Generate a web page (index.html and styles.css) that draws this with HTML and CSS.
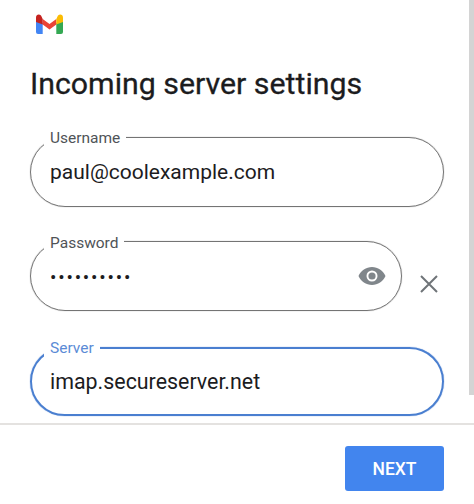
FILE: index.html
```html
<!DOCTYPE html>
<html lang="en">
<head>
<meta charset="utf-8">
<title>Incoming server settings</title>
<link rel="stylesheet" href="styles.css">
</head>
<body>
<div class="screen">
  <div class="scrollbar"></div>
  <main class="content">
    <svg class="logo" viewBox="0 0 27 20" width="27" height="20" aria-label="Gmail">
      <path d="M0 6V18a2 2 0 0 0 2 2H6.700V9z" fill="#4285f4"/>
      <path d="M20.300 20H25a2 2 0 0 0 2-2V6l-6.700 3z" fill="#34a853"/>
      <path d="M6.700 5 13.500 10 20.300 5V10.500L13.500 15.500 6.700 10.500z" fill="#ea4335"/>
      <path d="M0 8V3.500C0 .5 3-.3 5 1.500L6.700 5V10.500z" fill="#c5221f"/>
      <path d="M20.300 5 22 1.500C24-.3 27 .5 27 3.500V8L20.300 10.500z" fill="#fbbc04"/>
    </svg>
    <h1 class="title">Incoming server settings</h1>
    <div class="field field-username">
      <span class="label">Username</span>
      <span class="value">paul@coolexample.com</span>
    </div>
    <div class="password-row">
      <div class="field field-password">
        <span class="label">Password</span>
        <span class="value dots">••••••••••</span>
        <svg class="eye" viewBox="0 0 28 20" width="28" height="20">
          <path fill-rule="evenodd" d="M14 1C8 1 3 4.700 0.500 10 3 15.300 8 19 14 19s11-3.700 13.500-9C25 4.700 20 1 14 1zM14 15.500a5.500 5.500 0 1 1 0-11 5.500 5.500 0 0 1 0 11z" fill="#80868b"/>
          <circle cx="14" cy="10" r="3.600" fill="#80868b"/>
        </svg>
      </div>
      <svg class="clear" viewBox="0 0 18 18" width="18" height="18">
        <path d="M1 1l16 16M17 1L1 17" stroke="#6f7478" stroke-width="2" fill="none"/>
      </svg>
    </div>
    <div class="field field-server">
      <span class="label">Server</span>
      <span class="value">imap.secureserver.net</span>
    </div>
  </main>
  <footer class="footer">
    <button class="next" type="button">NEXT</button>
  </footer>
</div>
</body>
</html>
```
FILE: styles.css
```css
* { box-sizing: border-box; }
html, body { margin: 0; padding: 0; background: #fff; }
body { font-family: Roboto, "Noto Sans", sans-serif; }
.screen { position: relative; width: 474px; height: 504px; overflow: hidden; display: flex; flex-direction: column; }
.scrollbar { position: absolute; top: 0; right: 0; width: 5px; height: 395px; background: #d4d4d4; }
.content { height: 423px; padding: 14px 30px 0; overflow: hidden; }
.logo { display: block; margin: 0 0 0 6px; }
.title { margin: 30px 0 0; font-size: 30.300px; line-height: 40px; font-weight: 400; color: #1c1c1e; white-space: nowrap; -webkit-text-stroke: 0.300px #1c1c1e; }
.field { position: relative; height: 70px; border: 1px solid #747474; box-shadow: 0 0 1px #8c8c8c; border-radius: 35px; display: flex; align-items: center; padding-left: 19px; }
.field-username { margin-top: 33px; width: 414px; }
.password-row { display: flex; align-items: center; margin-top: 34px; }
.field-password { width: 372px; }
.field-server { margin-top: 36px; width: 414px; height: 69px; border: 2px solid #4a7fd0; box-shadow: 0 0 1px #4a7fd0; padding-left: 19px; }
.label { position: absolute; left: 13px; top: -10px; padding: 0 6px; background: #fff; font-size: 15.500px; line-height: 20px; color: #4f5357; }
.field-password .label { top: -9px; }
.field-server .label { color: #5b8bd6; top: -11px; left: 12px; }
.value { font-size: 21px; line-height: 28px; color: #1c1c1e; white-space: nowrap; }
.field-server .value { margin-left: -1px; font-size: 21.400px; }
.dots { font-size: 19px; letter-spacing: 1.800px; margin-top: 4px; }
.eye { position: absolute; right: 15px; top: 24px; }
.clear { margin-left: 18px; margin-top: 16px; }
.footer { height: 81px; border-top: 2px solid #e4e2e0; display: flex; justify-content: flex-end; padding: 21px 30px 0 0; }
.next { width: 99px; height: 45px; border: 0; border-radius: 3px; background: #4285ee; color: #fff; font-family: Roboto, sans-serif; font-size: 17.500px; font-weight: 500; }
```
